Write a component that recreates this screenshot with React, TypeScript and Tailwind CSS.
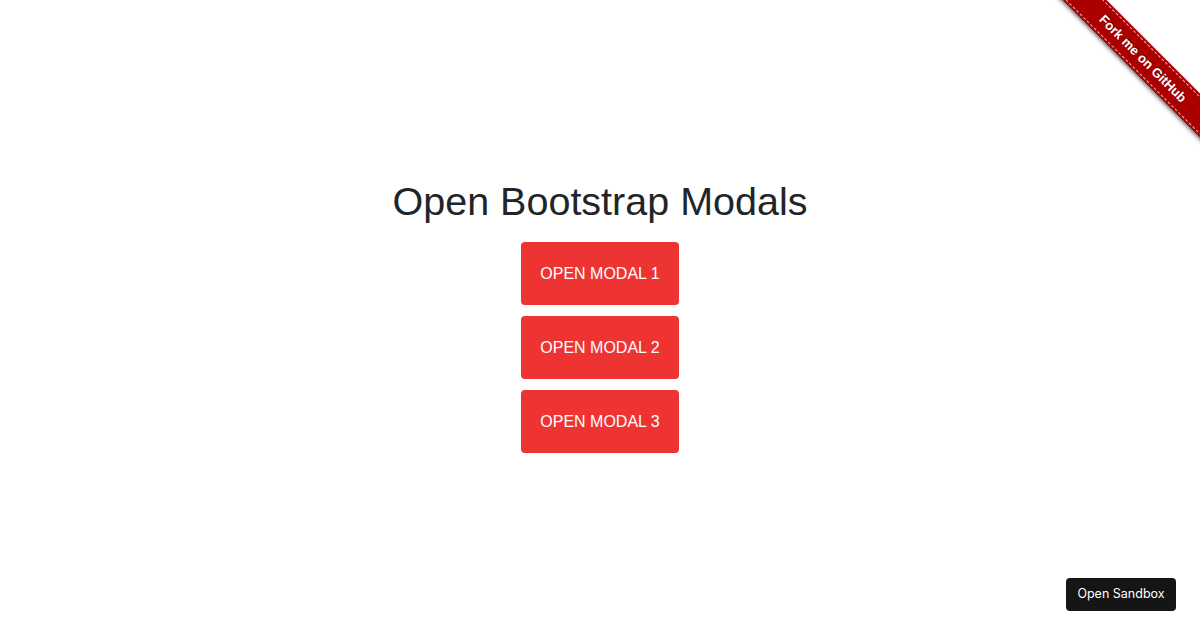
import React from "react";

function ForkRibbon() {
  return (
    <div className="pointer-events-none absolute right-0 top-0 h-[150px] w-[150px] overflow-hidden">
      <a
        href="#"
        className="pointer-events-auto absolute left-[-18px] top-[43px] block w-[222px] rotate-45 bg-[#a00] py-[2px] shadow-[0_2px_4px_rgba(0,0,0,0.5)]"
      >
        <span
          className="block border-y border-dashed border-white/70 text-center text-[13px] font-bold leading-[25px] text-white [text-shadow:0_-1px_0_rgba(0,0,0,0.5)]"
          style={{ fontFamily: '"Liberation Sans", Arial, sans-serif' }}
        >
          Fork me on GitHub
        </span>
      </a>
    </div>
  );
}

export default function App() {
  const buttons = ["OPEN MODAL 1", "OPEN MODAL 2", "OPEN MODAL 3"];
  return (
    <div
      className="relative flex h-[630px] w-full flex-col items-center justify-center bg-white text-[#212529]"
      style={{ fontFamily: '"Liberation Sans", Arial, sans-serif' }}
    >
      <h1 className="mb-[17px] text-[39.5px] font-normal leading-[48px]">Open Bootstrap Modals</h1>
      <div className="flex flex-col gap-[11px]">
        {buttons.map((label) => (
          <button
            key={label}
            className="h-[63px] w-[158px] rounded-[4px] bg-[#ee3333] text-[16px] text-white"
          >
            {label}
          </button>
        ))}
      </div>
      <ForkRibbon />
      <button
        className="absolute bottom-[19px] right-[24px] h-[33px] w-[110px] rounded-[4px] bg-[#151515] text-[12.5px] text-white"
        style={{ fontFamily: 'Inter, "Noto Sans", sans-serif' }}
      >
        Open Sandbox
      </button>
    </div>
  );
}
